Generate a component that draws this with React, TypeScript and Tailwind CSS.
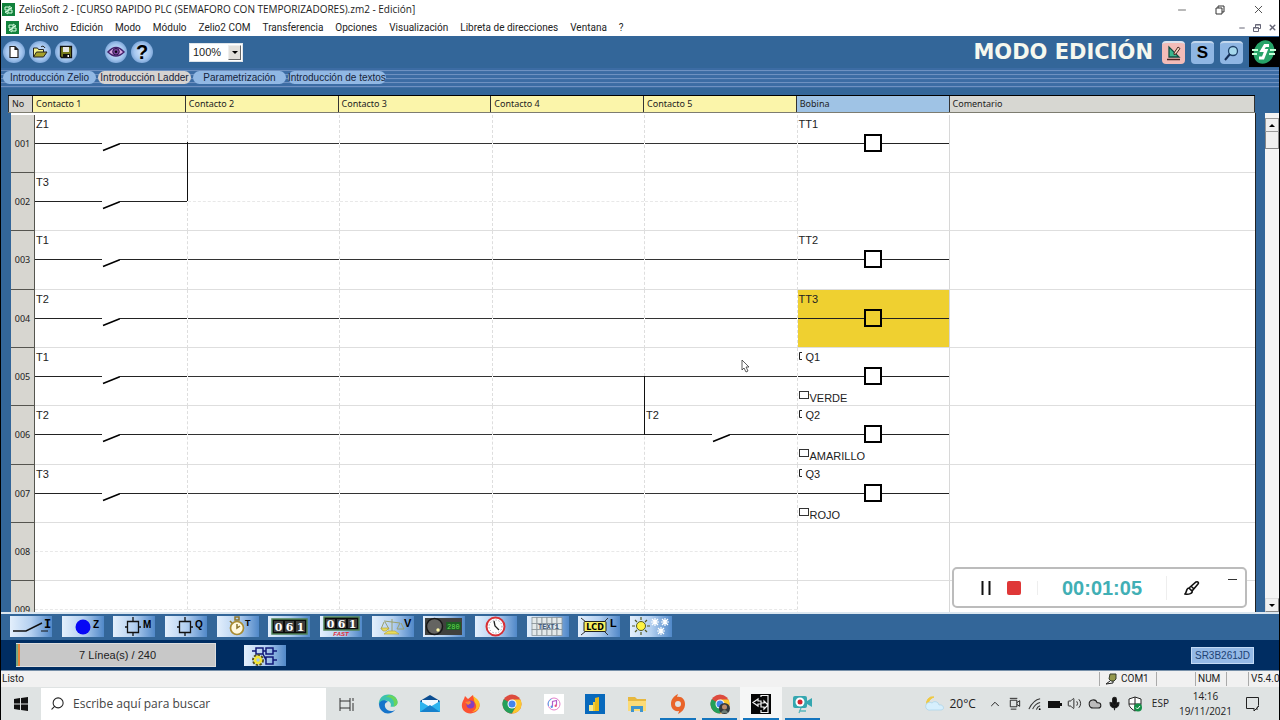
import React from "react";
import { Search, ChevronUp, Volume2, Cloud, Mic, Minus, X } from "lucide-react";

type Cell = { label?: string; kind?: "contact" | "wire" | "coil" | "empty"; note?: string; mark?: boolean; up?: boolean; selected?: boolean };
type Rung = { no: string; cells: Cell[] };

const wire: Cell = { kind: "wire" };
const none: Cell = { kind: "empty" };
const contact = (label: string, up = false): Cell => ({ kind: "contact", label, up });

const rungs: Rung[] = [
  { no: "001", cells: [contact("Z1"), wire, wire, wire, wire, { kind: "coil", label: "TT1" }] },
  { no: "002", cells: [contact("T3"), { kind: "empty", up: true }, none, none, none, {}] },
  { no: "003", cells: [contact("T1"), wire, wire, wire, wire, { kind: "coil", label: "TT2" }] },
  { no: "004", cells: [contact("T2"), wire, wire, wire, wire, { kind: "coil", label: "TT3", selected: true }] },
  { no: "005", cells: [contact("T1"), wire, wire, wire, wire, { kind: "coil", label: "Q1", mark: true, note: "VERDE" }] },
  { no: "006", cells: [contact("T2"), wire, wire, wire, contact("T2", true), { kind: "coil", label: "Q2", mark: true, note: "AMARILLO" }] },
  { no: "007", cells: [contact("T3"), wire, wire, wire, wire, { kind: "coil", label: "Q3", mark: true, note: "ROJO" }] },
  { no: "008", cells: [none, none, none, none, none, {}] },
  { no: "009", cells: [none, none, none, none, none, {}] },
];

function ZelioMark() {
  return (
    <svg viewBox="0 0 13 13" className="size-[13px] shrink-0">
      <rect width="13" height="13" fill="#12823c" />
      <path d="M3 4h4v3H3zM6 7h4v3H6zM7 3l3 2-3 1M6 11L3 9l3-1" fill="none" stroke="#d9ffe2" strokeWidth="1" />
    </svg>
  );
}

function RoundButton({ label, children }: { label: string; children: React.ReactNode }) {
  return (
    <button aria-label={label} className="grid size-[22px] place-items-center rounded-full bg-radial from-[#d5e6fb] via-[#a3c5ee] to-[#4d80bd]">
      <svg viewBox="0 0 18 18" className="size-[18px] overflow-visible">{children}</svg>
    </button>
  );
}

function Tab({ children, active }: { children: string; active?: boolean }) {
  return (
    <button className={`flex h-[13px] min-w-[93px] items-center justify-center rounded-lg text-[10px] leading-[13px] whitespace-nowrap text-[#15233a] ${active ? "bg-[#d6d3d1]" : "bg-[#91b8e4]"}`}>
      {children}
    </button>
  );
}

function LadderCell({ cell }: { cell: Cell }) {
  const { kind, label, note, mark, up, selected } = cell;
  return (
    <td className={`relative flex min-w-0 flex-col border-r border-b border-[#dedede] ${kind === "coil" || !kind ? "border-r-[#d8d8d8]" : "[border-right-style:dashed]"} ${selected ? "bg-[#efd030]" : ""}`}>
      <div className="flex h-7 items-start gap-1 pt-[2px] pl-px text-[11px] leading-[14px]">
        {mark && <svg viewBox="0 0 3 8" className="mt-[2px] h-2 w-[3px]"><path d="M3 .5H.5v7H3" fill="none" stroke="#222" /></svg>}
        {label}
      </div>
      {kind === "wire" && <div className="h-px bg-[#333]" />}
      {kind === "empty" && <div className="border-t border-dashed border-[#e8e8e8]" />}
      {kind === "contact" && (
        <div className="flex items-start">
          <div className="h-px flex-1 bg-[#222]" />
          <svg viewBox="0 0 18 9" className="h-[9px] w-[18px]"><path d="M1 7.500L18 .7" stroke="#000" strokeWidth="1.700" /></svg>
          <div className="h-px flex-1 bg-[#222]" />
        </div>
      )}
      {kind === "coil" && (
        <div className="-mt-[9px] flex items-start">
          <div className="mt-[9px] h-px flex-1 bg-[#222]" />
          <div className="h-[18px] w-[18px] shrink-0 border-2 border-black" />
          <div className="mt-[9px] h-px flex-1 bg-[#222]" />
        </div>
      )}
      {note && (
        <div className="flex items-start pt-[6px] pl-px text-[11px] leading-[14px]">
          <span className="mr-px h-2 w-[10px] border border-[#333]" />
          {note}
        </div>
      )}
      {up && <span className="absolute bottom-[29px] -left-px h-[59px] w-px bg-[#111]" />}
    </td>
  );
}

function ToolButton({ label, children }: { label: string; children: React.ReactNode }) {
  return (
    <button aria-label={label} className="h-[21px] w-[42px] bg-linear-to-r from-[#e3effc] via-[#b4d0f0] to-[#5088c8]">
      <svg viewBox="0 0 42 21" className="block h-[21px] w-[42px]">{children}</svg>
    </button>
  );
}

const mono = "Liberation Mono, monospace";
const sans = "Liberation Sans, sans-serif";

function Counter({ fast }: { fast?: boolean }) {
  const h = fast ? 13 : 15;
  return (
    <>
      <rect x="4" y={fast ? 1 : 3} width="35" height={h} fill="#0b0b0b" stroke="#4f8256" strokeWidth="1.500" />
      {[0, 1, 2].map((i) => (
        <g key={i}>
          <rect x={6 + i * 11} y={fast ? 3 : 5} width="9" height={h - 4} fill="#3d3d3d" />
          <text x={10.5 + i * 11} y={fast ? 11.5 : 14.5} textAnchor="middle" fontFamily="DejaVu Serif, serif" fontWeight="700" fontSize="11" fill="#fff">{"061"[i]}</text>
        </g>
      ))}
      {fast && <text x="21" y="20" textAnchor="middle" fontFamily={sans} fontStyle="italic" fontWeight="700" fontSize="6" fill="#e02b35">FAST</text>}
    </>
  );
}

function CoilSymbol({ letter }: { letter: string }) {
  return (
    <>
      <path d="M14.500 5.500h11v11h-11zM20 1v4M20 17v3M12 11h2M26 11h2" fill="none" stroke="#111" strokeWidth="1.300" />
      <text x="30" y="12" fontFamily={sans} fontSize="10" fontWeight="700">{letter}</text>
    </>
  );
}

function Chrome() {
  return (
    <>
      <circle cx="10" cy="10" r="9.500" fill="#dd4b3e" />
      <path d="M10 10L1.800 5.200A9.500 9.500 0 0 0 10 19.500L14 12z" fill="#23a05a" />
      <path d="M10 5.500h8.400A9.500 9.500 0 0 1 10 19.500l4-7z" fill="#fbc82f" />
      <circle cx="10" cy="10" r="4.500" fill="#fff" />
      <circle cx="10" cy="10" r="3.500" fill="#4285ec" />
    </>
  );
}

const apps: { name: string; art: React.ReactNode; open?: boolean; active?: boolean }[] = [
  { name: "Vista de tareas", art: <path d="M3 4v3h10V4M3 17v-3h10v3M3 7v7M13 7v7M16 4v3M16 9v8" fill="none" stroke="#333" /> },
  {
    name: "Edge",
    art: (
      <>
        <path d="M1 11C0 5 5 0 11 .5c6 .4 9 5 8.500 8.500-.4 3-4 4.500-7 3.500 1-2 0-5-3-5.500C5 6.300 2 8 1 11z" fill="#3cc3b0" />
        <path d="M1 10c1-4 6-5 9-2-3 0-4 3-2.500 6 2 3.500 7 4 10 1.500C14 20 8 21 4 17c-2-2-3-4-3-7z" fill="#1674ca" />
        <path d="M11 1c5 0 9 4 8.500 8-.4 2-2 3.500-4 3.700C17 8 15 3 8 3z" fill="#69d55c" />
      </>
    ),
  },
  { name: "Correo", art: <><path d="M0 7l10-6 10 6v11H0z" fill="#0b4d91" /><path d="M2 6h16v7H2z" fill="#eef8ff" /><path d="M0 7l10 6 10-6v11H0z" fill="#2bb3ee" /><path d="M0 18l10-7 10 7z" fill="#1580cc" /></> },
  { name: "Firefox", art: <><path d="M3 5l1-3 3 3c2-1 3-3 5-4 0 3 3 3 5 6 4 5 0 12-7 12.500C4 20 0 15 1 10c.3-2 1-3 2-5z" fill="#fc5232" /><path d="M12 1c1 3 5 3 6.500 8 1 5-3 9-8 9 5-2 6-6 3-10z" fill="#ffbe22" /><circle cx="9.500" cy="10.500" r="4" fill="#8540c0" /><path d="M4 8l5-1 1 2-3 2z" fill="#ff8730" /></> },
  { name: "Chrome", art: <Chrome /> },
  { name: "iTunes", art: <><rect width="20" height="20" fill="#fff" /><circle cx="10" cy="10" r="6" fill="none" stroke="#df72c4" strokeWidth=".9" /><path d="M4.500 12a6 6 0 0 1 3-7" fill="none" stroke="#57a8ec" /><path d="M8.500 12.500V7.500l4-1v5" fill="none" stroke="#b65cc9" strokeWidth="1.200" /><circle cx="7.700" cy="12.700" r="1.200" fill="#5a92e4" /><circle cx="11.700" cy="11.700" r="1.200" fill="#ea5483" /></> },
  { name: "Power BI", art: <><rect width="20" height="20" fill="#0869bc" /><path d="M4 11h6v6H4z" fill="#f7e991" /><path d="M8 8h5v9H8z" fill="#f2cc3b" /><path d="M10 4l4-1v14h-4z" fill="#e9b91b" /></> },
  { name: "Explorador de archivos", art: <><path d="M1 3h7l2 2h9v12H1z" fill="#e7b83f" /><path d="M1 7h18v10H1z" fill="#fbdb77" /><path d="M4 18v-6h12v6h-3v-3H7v3z" fill="#3f95cd" /></> },
  { name: "Origin", art: <path fillRule="evenodd" d="M10 0L9 3c5-1 8 3 8 7 0 5-3 8-7 10l1-3c-5 1-8-3-8-7 0-5 3-8 7-10zm0 7a3 3 0 1 0 0 6 3 3 0 0 0 0-6z" fill="#e96429" />, open: true },
  { name: "Chrome, perfil", art: <><Chrome /><circle cx="14.500" cy="14.500" r="5.500" fill="#343a3d" /><circle cx="14.500" cy="13" r="2.500" fill="#bd8c6c" /><path d="M11 19c1-4 6-4 7 0z" fill="#6d7c74" /></>, open: true },
  { name: "ZelioSoft 2", art: <><rect width="20" height="20" fill="#050505" /><path d="M10 3V1.500h7v17h-7V16M7 5L2 8.500 7 12v-2h3v3h3v2l4-4-4-4v2h-3V7H7z" fill="none" stroke="#f4f4f4" strokeWidth="1.200" /></>, open: true, active: true },
  { name: "Grabador", art: <><rect x="1" y="2" width="14" height="12" rx="2" fill="#35a7b0" /><path d="M15 7l5-3v9l-5-3z" fill="#35a7b0" /><circle cx="8" cy="8" r="4.500" fill="#fff" /><circle cx="8" cy="8" r="2.500" fill="#d4232c" /><path d="M9 14l-2 5M7 17h7" stroke="#5ab7bd" strokeWidth="1.300" /></>, open: true },
];

const columns = ["Contacto 1", "Contacto 2", "Contacto 3", "Contacto 4", "Contacto 5"];
const menus = ["Archivo", "Edición", "Modo", "Módulo", "Zelio2 COM", "Transferencia", "Opciones", "Visualización", "Libreta de direcciones", "Ventana", "?"];

export default function App() {
  return (
    <div className="relative flex h-screen flex-col overflow-hidden border-x border-black bg-[#336699] font-['Liberation_Sans',sans-serif] text-[#222]">
      <header className="shrink-0 bg-white">
        <div className="flex h-[19px] items-center gap-1 pl-px font-['Open_Sans',sans-serif] text-[10px]">
          <ZelioMark />
          <h1 className="flex-1 whitespace-nowrap">ZelioSoft 2 - [CURSO RAPIDO PLC (SEMAFORO CON TEMPORIZADORES).zm2 - Edición]</h1>
          <div className="flex gap-[26px] pr-[14px] text-[#444]">
            <button aria-label="Minimizar"><Minus size={12} strokeWidth={1.5} /></button>
            <button aria-label="Restaurar"><svg viewBox="0 0 12 12" className="size-3"><path d="M2 4h6v6H2zM4 4V2h6v6H8" fill="none" stroke="#333" /></svg></button>
            <button aria-label="Cerrar"><X size={13} strokeWidth={1.7} /></button>
          </div>
        </div>
        <div className="flex h-[17px] items-center pl-[5px] font-['Roboto',sans-serif] text-[10px]">
          <ZelioMark />
          <nav className="flex flex-1 gap-3 pl-[6px]">
            {menus.map((m) => <button key={m} className="whitespace-nowrap">{m}</button>)}
          </nav>
          <div className="flex gap-[7px] pr-[2px] text-[#667]">
            <button aria-label="Minimizar documento"><Minus size={8} strokeWidth={3} /></button>
            <button aria-label="Restaurar documento"><svg viewBox="0 0 8 8" className="size-2"><path d="M.5 3.500h5v4h-5zM2.500 3V.5h5v4H6M.5 4h5M2.500 1h5" fill="none" stroke="#667" /></svg></button>
            <button aria-label="Cerrar documento"><X size={9} strokeWidth={4} /></button>
          </div>
        </div>
      </header>

      <div className="flex h-8 shrink-0 items-center pl-[2px]">
        <div className="flex gap-1">
          <RoundButton label="Nuevo"><path d="M5 3.500h5l3 3v8H5zM10 3.500v3h3" fill="#fff" stroke="#222" strokeWidth="1.200" /></RoundButton>
          <RoundButton label="Abrir"><path d="M2.500 14V5h4l1 1.500h5V9" fill="#f3f28d" stroke="#222" /><path d="M2.500 14l3-5H16l-3.500 5z" fill="#a6a02a" stroke="#222" /><path d="M10 4c1-1.500 3-1 4 1" fill="none" stroke="#222" /></RoundButton>
          <RoundButton label="Guardar"><path d="M3.500 3.500h11v11h-10l-1-1z" fill="#777b1e" stroke="#111" strokeWidth="1.300" /><path d="M6 4h6v5H6z" fill="#e8e8e8" /><path d="M6 11h7v3.500H6z" fill="#111" /><path d="M10.500 12h1.500v2h-1.500z" fill="#fff" /></RoundButton>
        </div>
        <div className="flex gap-1 pl-[28px]">
          <RoundButton label="Supervisar"><path d="M1 9q8-9 16 0-8 8-16 0z" fill="#d5a8df" stroke="#42206b" strokeWidth="1.500" /><circle cx="9" cy="8.700" r="3.300" fill="#764296" stroke="#2e154e" /><circle cx="9" cy="8.700" r="1.200" fill="#080414" /></RoundButton>
          <RoundButton label="Ayuda"><text x="9" y="16" textAnchor="middle" fontFamily={sans} fontWeight="700" fontSize="20">?</text></RoundButton>
        </div>
        <label className="relative ml-9 flex h-[19px] w-[54px] border border-[#dfe5ea] bg-white">
          <select aria-label="Zoom" defaultValue="100%" className="w-full appearance-none bg-white pl-[3px] text-[11px] leading-4 outline-none"><option>100%</option></select>
          <span className="pointer-events-none absolute inset-y-px right-px grid w-[13px] place-items-center border border-[#eee] border-r-[#666] border-b-[#666] bg-[#e2e0dc]"><svg viewBox="0 0 6 3" className="h-[3px] w-[6px]"><path d="M0 0h6L3 3z" /></svg></span>
        </label>
        <div className="flex flex-1 items-center justify-end">
          <h2 className="pr-[9px] font-['DejaVu_Sans',sans-serif] text-[21px] leading-6 font-bold whitespace-nowrap text-[#f6f8ee]">MODO EDICIÓN</h2>
          <div className="flex gap-[6px] pr-[6px]">
            <button aria-label="Modo edición" className="size-[23px] rounded-sm border-t-2 border-[#dce3ee] bg-[#f3bcb8]"><svg viewBox="0 0 23 21"><path d="M7 4v10h10z" fill="#3bb58c" stroke="#154b42" strokeWidth="1.300" /><path d="M12 10l4-6 2 1.500-4 5.500-2 .5z" fill="#f3d9c0" stroke="#4b2522" /><path d="M5 16.500h13" stroke="#4b2522" strokeWidth="1.500" /></svg></button>
            <button className="size-[23px] rounded-sm border-t-2 border-[#c3d7ed] bg-[#8fb6e3] text-[17px] leading-5 font-bold text-black">S</button>
            <button aria-label="Modo supervisión" className="size-[23px] rounded-sm border-t-2 border-[#c3d7ed] bg-[#8fb6e3]"><svg viewBox="0 0 23 21"><circle cx="13" cy="8" r="4.500" fill="#a6d9ed" stroke="#204269" strokeWidth="1.300" /><path d="M10 11l-5 6" stroke="#152d55" strokeWidth="2" /></svg></button>
          </div>
          <div className="grid size-[30px] place-items-center bg-black"><svg viewBox="0 0 26 26" className="size-[26px]"><ellipse cx="13" cy="13" rx="10" ry="12" transform="rotate(25 13 13)" fill="#26a368" /><path d="M1 11h6M19 11h6M1 15h5M18 15h6" stroke="#c7ffd9" strokeWidth="2" /><path d="M18 6.500h-4l-3 5h4l-3 7.500H8" fill="none" stroke="#fff" strokeWidth="3" /></svg></div>
        </div>
      </div>

      <div className="flex h-5 shrink-0 items-center gap-[2px] bg-[repeating-linear-gradient(180deg,#3c6ca4_0_2px,#6e91c1_2px_3px,#3f6ea5_3px_4px)] pb-[2px] pl-[2px]">
        <Tab>Introducción Zelio</Tab>
        <Tab active>Introducción Ladder</Tab>
        <Tab>Parametrización</Tab>
        <Tab>Introducción de textos</Tab>
      </div>

      <main className="flex min-h-0 flex-1 flex-col border-b-2 border-[#dce7f0] pt-[7px]">
        <table className="mx-[7px] mr-6 block shrink-0 border-t border-black font-['Noto_Sans',sans-serif] text-[9px]">
          <thead className="block">
            <tr className="grid h-[17px] grid-cols-[25px_repeat(6,minmax(0,1fr))_minmax(0,2fr)] border-b-2 border-[#7d7c70] text-left leading-4">
              <th className="border-x border-[#333] bg-[#d7d5cf] pl-[3px] font-normal">No</th>
              {columns.map((c) => <th key={c} className="border-r border-[#333] bg-[#fbf5aa] pl-[3px] font-normal">{c}</th>)}
              <th className="border-r border-[#333] bg-[#9fc3e5] pl-[3px] font-normal">Bobina</th>
              <th className="border-r border-[#333] bg-[#d7d7d2] pl-[3px] font-normal">Comentario</th>
            </tr>
          </thead>
        </table>
        <div className="flex min-h-0 flex-1 pl-[10px]">
          <table className="block flex-1 overflow-hidden border-r border-[#222] bg-white">
            <tbody className="block pt-[2px]">
              {rungs.map((r) => (
                <tr key={r.no} className="grid h-[58px] grid-cols-[24px_repeat(6,minmax(0,1fr))_minmax(0,2fr)] nth-[3n]:h-[59px]">
                  <th className="grid place-items-center border-r border-b border-[#55554f] bg-[#d7d6d0] font-['Noto_Sans',sans-serif] text-[9px] font-normal">{r.no}</th>
                  {r.cells.map((c, i) => <LadderCell key={i} cell={c} />)}
                  <td className="border-b border-[#dedede]" />
                </tr>
              ))}
            </tbody>
          </table>
          <div className="ml-[9px] flex w-[14px] flex-col bg-[#f4f4f4] pt-[5px]">
            <button aria-label="Subir" className="grid h-[14px] place-items-center border border-[#999] bg-[#f0f0f0]"><svg viewBox="0 0 6 3" className="h-[3px] w-[6px]"><path d="M0 3h6L3 0z" /></svg></button>
            <div className="h-[17px] border border-t-0 border-[#888] bg-[#f0f0f0]" />
            <div className="flex-1" />
            <button aria-label="Bajar" className="grid h-[14px] place-items-center border border-[#ddd] border-r-[#888] border-b-[#888] bg-[#f0f0f0]"><svg viewBox="0 0 6 3" className="h-[3px] w-[6px]"><path d="M0 0h6L3 3z" /></svg></button>
          </div>
        </div>
      </main>

      <div className="h-[26px] shrink-0 pt-[2px] pl-[9px]">
        <div className="flex w-[662px] justify-between">
          <ToolButton label="Entradas"><path d="M3 15h13l16-8" fill="none" stroke="#111" strokeWidth="1.400" /><text x="34" y="12" fontFamily={mono} fontSize="12" fontWeight="700">I</text><path d="M31 15h7" stroke="#111" /></ToolButton>
          <ToolButton label="Teclas Z"><circle cx="21" cy="11" r="7.500" fill="#0707f5" /><text x="31" y="12" fontFamily={sans} fontSize="10" fontWeight="700">Z</text></ToolButton>
          <ToolButton label="Relés auxiliares"><CoilSymbol letter="M" /></ToolButton>
          <ToolButton label="Salidas"><CoilSymbol letter="Q" /></ToolButton>
          <ToolButton label="Temporizadores"><circle cx="20" cy="12" r="6.500" fill="#fff9df" stroke="#a98c32" strokeWidth="1.700" /><path d="M18 1h4v3h-4zM13 5l2 2M20 8v4l3-2" fill="none" stroke="#8b752e" strokeWidth="1.500" /><text x="28" y="10" fontFamily={sans} fontSize="9" fontWeight="700">T</text></ToolButton>
          <ToolButton label="Contadores"><Counter /></ToolButton>
          <ToolButton label="Contador rápido"><Counter fast /></ToolButton>
          <ToolButton label="Comparadores"><path d="M20 3v13M12 5l16 2M12 6l-3 7h8l-4-7M28 7l-3 6h7l-3-6" fill="none" stroke="#9aa06d" /><path d="M12 18h15l-4-3h-7zM9 12h8l-3 3h-3z" fill="#eadc58" stroke="#b4a344" strokeWidth=".7" /><text x="32" y="11" fontFamily={sans} fontSize="11" fontWeight="700">V</text></ToolButton>
          <ToolButton label="Comparadores analógicos"><rect x="2" y="2" width="37" height="17" fill="#40413e" /><circle cx="11.500" cy="10.500" r="8" fill="#646461" stroke="#171717" strokeWidth="1.500" /><circle cx="15" cy="14" r="1.700" fill="#fff8a7" /><rect x="23" y="6" width="15" height="8" fill="#1d5d23" /><text x="24" y="13" fontFamily={mono} fontSize="7" fill="#61dd50">280</text></ToolButton>
          <ToolButton label="Reloj"><circle cx="20.500" cy="10.500" r="9" fill="#fff" stroke="#d73036" strokeWidth="2" /><circle cx="20.500" cy="10.500" r="6.500" fill="none" stroke="#889" strokeDasharray="1 2" /><path d="M19 5l1 5 4 4" fill="none" stroke="#222" strokeWidth="1.300" /></ToolButton>
          <ToolButton label="Textos"><g fill="#e3e9ea" stroke="#8a9499" strokeWidth=".8">{[1, 7, 13].map((y) => [5, 10, 15, 20, 25, 30].map((x) => <rect key={`${x}-${y}`} x={x} y={y + 0.5} width="5" height="6" />))}</g><text x="11" y="12.500" fontFamily={mono} fontSize="7" fontWeight="700" fill="#435b7b">TEXT1</text></ToolButton>
          <ToolButton label="Retroiluminación"><path d="M3 2l5 4M3 19l5-4M30 2l-4 4M30 19l-4-4" stroke="#333" /><rect x="6" y="5.500" width="22" height="10" rx="1" fill="#f5ef61" stroke="#222" /><text x="17" y="13.500" textAnchor="middle" fontFamily="DejaVu Sans, sans-serif" fontSize="8" fontWeight="700">LCD</text><text x="32" y="11" fontFamily={sans} fontSize="11" fontWeight="700">L</text></ToolButton>
          <ToolButton label="Cambio de horario"><circle cx="11" cy="10" r="4.500" fill="#fff340" stroke="#555924" /><path d="M11 1v3M11 16v3M2 10h3M17 10h3M5 4l2 2M15 14l2 2M17 4l-2 2M7 14l-2 2" stroke="#555924" strokeWidth="1.200" /><g stroke="#fff" strokeWidth="1.200">{[[25, 6], [35, 6], [31, 15]].map(([x, y]) => <path key={x} d={`M${x - 4} ${y}h8M${x} ${y - 4}v8M${x - 3} ${y - 3}l6 6M${x + 3} ${y - 3}l-6 6`} />)}</g></ToolButton>
        </div>
      </div>

      <div className="flex h-[31px] shrink-0 items-center justify-between border-b border-[#7890a9] bg-[#002d62] pr-[25px] pl-[15px]">
        <div className="flex items-center gap-7">
          <div className="flex h-6 w-[200px] items-center border border-l-0 border-[#ddd] bg-[#c8c8c8] text-[11px]">
            <span className="h-full w-1 border-l-2 border-[#7aa780] bg-[#e6853c]" />
            <span className="flex-1 text-center">7 Línea(s) / 240</span>
          </div>
          <ToolButton label="Coherencia"><path d="M12 3h7v6h-7zM22 3h7v6h-7zM22 12h7v7h-7zM19 6h3M29 6h4M29 15h4M8 6h4M19 9l3 6" fill="none" stroke="#101978" strokeWidth="1.500" /><circle cx="14" cy="15" r="4" fill="none" stroke="#55501a" strokeWidth="4" strokeDasharray="2 1" /><circle cx="14" cy="15" r="3" fill="#a3c6ee" stroke="#f3e534" strokeWidth="2.500" /></ToolButton>
        </div>
        <span className="h-[17px] border border-[#c3daf5] bg-[#94b9e6] px-[3px] text-[10px] leading-[15px] text-[#204274]">SR3B261JD</span>
      </div>

      <div className="flex h-4 shrink-0 items-center bg-[#f1f1f1] font-['Roboto',sans-serif] text-[10px] leading-[14px]">
        <span className="flex-1 pl-px">Listo</span>
        <span className="flex h-[14px] w-[57px] items-center gap-[3px] border-l border-[#aaa] pl-1"><svg viewBox="0 0 14 14" className="size-[14px]"><path d="M6 2h6v5l-2 2H7L5 7z" fill="#94984c" stroke="#343a2b" /><path d="M9 9v2l-7 1 4-3" fill="none" stroke="#222" /></svg>COM1</span>
        <span className="h-[14px] w-10 border-x border-[#aaa]" />
        <span className="h-[14px] w-[31px] border-r border-[#aaa] pl-[2px]">NUM</span>
        <span className="h-[14px] w-[22px] border-r border-[#aaa]" />
        <span className="w-[30px] pl-[2px]">V5.4.0</span>
      </div>

      <footer className="flex h-[33px] shrink-0 items-center bg-[#dfe3e3] font-['Open_Sans',sans-serif]">
        <button aria-label="Inicio" className="grid w-10 place-items-center"><svg viewBox="0 0 14 14" className="size-[14px]"><path d="M0 2l6-1v5.500H0zM7 1l7-1v6.500H7zM0 7.500h6V13l-6-1zM7 7.500h7V14l-7-1z" fill="#111" /></svg></button>
        <label className="flex h-8 w-[285px] items-center gap-2 bg-white pl-[9px]">
          <Search size={15} strokeWidth={1.7} className="-scale-x-100" />
          <input aria-label="Buscar" placeholder="Escribe aquí para buscar" className="min-w-0 flex-1 text-[12px] outline-none placeholder:text-[#444]" />
        </label>
        <nav className="flex h-full w-[497px]">
          {apps.map((a) => (
            <button key={a.name} aria-label={a.name} className={`relative grid flex-1 place-items-center ${a.active ? "bg-[#f5f6f6]" : ""}`}>
              <svg viewBox="0 0 20 20" className="size-5">{a.art}</svg>
              {a.open && <span className="absolute inset-x-[3px] bottom-0 h-[2px] bg-[#1475be]" />}
            </button>
          ))}
        </nav>
        <div className="flex flex-1 items-center justify-end text-[#222]">
          <svg viewBox="0 0 20 16" className="mr-1 h-4 w-5"><path d="M2 9A6 6 0 0 1 9 1C4 3 4 6 2 9z" fill="#f0c940" stroke="#f0c940" /><path d="M6 14a4 4 0 1 1 1-7 4 4 0 0 1 7 2c5-1 6 5 2 5z" fill="#d6effd" stroke="#a6d2ea" strokeWidth=".7" /></svg>
          <span className="mr-[10px] text-[12px]">20°C</span>
          <div className="flex gap-[2px]">
            {[
              <ChevronUp key="a" size={14} strokeWidth={1.7} />,
              <svg key="b" viewBox="0 0 16 16" className="size-[15px]"><path d="M3.500 4.500h7v7h-7zM10.500 7l3-2v6l-3-2M3 2.500h8M4 14h6" fill="none" stroke="#222" /></svg>,
              <svg key="c" viewBox="0 0 16 16" className="size-[15px] -scale-x-100"><path d="M2 3Q9 4 14 14M2 7q5 1 8 7M2 10.500q3 1 4 4" fill="none" stroke="#333" strokeWidth="1.100" /><circle cx="2.500" cy="14" r="1" /></svg>,
              <svg key="d" viewBox="0 0 16 16" className="size-4"><path d="M1 5h12v7H1zM13 7h2v3h-2z" fill="#111" /></svg>,
              <Volume2 key="e" size={15} strokeWidth={1.5} />,
              <Cloud key="f" size={14} strokeWidth={1.8} fill="#bbb" />,
              <Mic key="g" size={15} strokeWidth={1.8} fill="#111" />,
              <svg key="h" viewBox="0 0 16 16" className="size-4"><path d="M8 1l6 2v5c0 4-6 7-6 7s-6-3-6-7V3zM8 1v14M2 8h12" fill="#fff" stroke="#222" /><circle cx="11" cy="11.500" r="4" fill="#159048" /><path d="M9 11.500l1.500 1.500 2.500-3" stroke="#fff" fill="none" /></svg>,
            ].map((icon, i) => <span key={i} className="grid w-[18px] place-items-center">{icon}</span>)}
          </div>
          <span className="ml-2 text-[10px]">ESP</span>
          <div className="mx-[10px] text-center text-[10px] leading-[15px]"><div>14:16</div><div>19/11/2021</div></div>
          <svg viewBox="0 0 16 16" className="mr-[18px] ml-[3px] size-4"><path d="M1.500 1.500h12v8M9 12.500H1.500v-11M9 12v3l5-5c-2 0-2 2-2 4" fill="none" stroke="#222" /></svg>
        </div>
      </footer>

      <section aria-label="Grabación" className="absolute right-8 bottom-[112px] flex h-[41px] w-[295px] items-center rounded-[5px] border-2 border-[#bcbcbc] bg-white">
        <div className="flex w-[84px] items-center justify-end gap-[15px] border-r border-[#eee] pr-[16px]">
          <button aria-label="Pausa"><svg viewBox="0 0 11 14" className="h-[14px] w-[11px]"><path d="M1.500 0v14M8.500 0v14" stroke="#111" strokeWidth="2" /></svg></button>
          <button aria-label="Detener" className="size-[14px] rounded-[2px] bg-[#df3737]" />
        </div>
        <div className="w-[129px] border-r border-[#eee] text-center text-[20px] leading-6 font-bold text-[#41afb5]">00:01:05</div>
        <button aria-label="Dibujar" className="ml-[17px]"><svg viewBox="0 0 16 16" className="size-4"><path d="M5 8l7-6c2-1 3 1 2 2l-6 7zM5 8c-3 0-2 4-4 6 4 1 8-1 7-3M7 6l3 3" fill="none" stroke="#111" strokeWidth="1.600" /></svg></button>
        <button aria-label="Minimizar grabador" className="mr-2 ml-auto h-[11px] w-[9px] self-start border-b border-[#333]" />
      </section>
      <svg viewBox="0 0 10 15" className="pointer-events-none absolute top-[359px] left-[740px] h-[15px] w-[10px]"><path d="M1 1v10l2-2 2 4 2-1-2-4h3z" fill="#fff" stroke="#333" strokeWidth=".8" /></svg>
    </div>
  );
}
